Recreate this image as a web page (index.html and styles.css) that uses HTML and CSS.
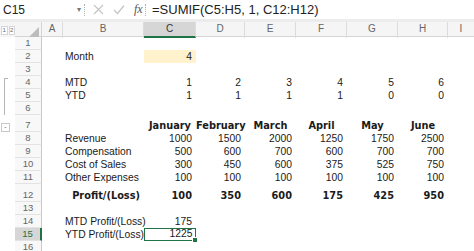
FILE: index.html
```html
<!DOCTYPE html>
<html lang="en">
<head>
    <meta charset="UTF-8">
    <title>Profit Summary</title>
    <link rel="stylesheet" href="styles.css">
</head>
<body>
    <div class="formula-bar">
        <div class="name-box">
            <span>C15</span>
            <span class="drop">&#9662;</span>
        </div>
        <div class="divider"></div>
        <div class="fb-icons">
            <svg width="11" height="11" viewBox="0 0 11 11"><path d="M1 1 L10 10 M10 1 L1 10" stroke="#c4c4c4" stroke-width="1.2" fill="none"/></svg>
            <svg width="12" height="11" viewBox="0 0 12 11"><path d="M1 6 L4.5 9.5 L11 1.5" stroke="#c4c4c4" stroke-width="1.2" fill="none"/></svg>
            <span class="fx">fx</span>
        </div>
        <div class="divider"></div>
        <div class="formula">=SUMIF(C5:H5, 1, C12:H12)</div>
    </div>
    <div class="band"></div>

    <div class="sheet">
        <!-- column headers -->
        <div class="row head-row">
            <div class="gutter levels"><span>1</span><span>2</span></div>
            <div class="corner"><div class="tri"></div></div>
            <div class="col-h">A</div>
            <div class="col-h">B</div>
            <div class="col-h active">C</div>
            <div class="col-h">D</div>
            <div class="col-h">E</div>
            <div class="col-h">F</div>
            <div class="col-h">G</div>
            <div class="col-h">H</div>
            <div class="col-h last">I</div>
        </div>

        <div class="row">
            <div class="gutter"></div><div class="row-h">1</div>
            <div></div><div></div><div></div><div></div><div></div><div></div><div></div><div></div><div></div>
        </div>
        <div class="row">
            <div class="gutter"></div><div class="row-h">2</div>
            <div></div><div class="c">Month</div><div class="c num fill">4</div><div></div><div></div><div></div><div></div><div></div><div></div>
        </div>
        <div class="row">
            <div class="gutter"></div><div class="row-h">3</div>
            <div></div><div></div><div></div><div></div><div></div><div></div><div></div><div></div><div></div>
        </div>
        <div class="row">
            <div class="gutter"><span class="ol-line top"></span></div><div class="row-h">4</div>
            <div></div><div class="c">MTD</div>
            <div class="c num">1</div><div class="c num">2</div><div class="c num">3</div><div class="c num">4</div><div class="c num">5</div><div class="c num">6</div><div></div>
        </div>
        <div class="row">
            <div class="gutter"><span class="ol-line"></span></div><div class="row-h">5</div>
            <div></div><div class="c">YTD</div>
            <div class="c num">1</div><div class="c num">1</div><div class="c num">1</div><div class="c num">1</div><div class="c num">0</div><div class="c num">0</div><div></div>
        </div>
        <div class="row">
            <div class="gutter"><span class="ol-line"></span></div><div class="row-h">6</div>
            <div></div><div></div><div></div><div></div><div></div><div></div><div></div><div></div><div></div>
        </div>
        <div class="row tall">
            <div class="gutter"><span class="ol-btn">-</span></div><div class="row-h">7</div>
            <div></div><div></div>
            <div class="c b mid">January</div><div class="c b mid">February</div><div class="c b mid">March</div><div class="c b mid">April</div><div class="c b mid">May</div><div class="c b mid">June</div><div></div>
        </div>
        <div class="row">
            <div class="gutter"></div><div class="row-h">8</div>
            <div></div><div class="c">Revenue</div>
            <div class="c num">1000</div><div class="c num">1500</div><div class="c num">2000</div><div class="c num">1250</div><div class="c num">1750</div><div class="c num">2500</div><div></div>
        </div>
        <div class="row">
            <div class="gutter"></div><div class="row-h">9</div>
            <div></div><div class="c">Compensation</div>
            <div class="c num">500</div><div class="c num">600</div><div class="c num">700</div><div class="c num">600</div><div class="c num">700</div><div class="c num">700</div><div></div>
        </div>
        <div class="row">
            <div class="gutter"></div><div class="row-h">10</div>
            <div></div><div class="c">Cost of Sales</div>
            <div class="c num">300</div><div class="c num">450</div><div class="c num">600</div><div class="c num">375</div><div class="c num">525</div><div class="c num">750</div><div></div>
        </div>
        <div class="row">
            <div class="gutter"></div><div class="row-h">11</div>
            <div></div><div class="c">Other Expenses</div>
            <div class="c num">100</div><div class="c num">100</div><div class="c num">100</div><div class="c num">100</div><div class="c num">100</div><div class="c num">100</div><div></div>
        </div>
        <div class="row taller">
            <div class="gutter"></div><div class="row-h">12</div>
            <div></div><div class="c b num">Profit/(Loss)</div>
            <div class="c b num">100</div><div class="c b num">350</div><div class="c b num">600</div><div class="c b num">175</div><div class="c b num">425</div><div class="c b num">950</div><div></div>
        </div>
        <div class="row">
            <div class="gutter"></div><div class="row-h">13</div>
            <div></div><div></div><div></div><div></div><div></div><div></div><div></div><div></div><div></div>
        </div>
        <div class="row">
            <div class="gutter"></div><div class="row-h">14</div>
            <div></div><div class="c">MTD Profit/(Loss)</div><div class="c num">175</div><div></div><div></div><div></div><div></div><div></div><div></div>
        </div>
        <div class="row">
            <div class="gutter"></div><div class="row-h active">15</div>
            <div></div><div class="c">YTD Profit/(Loss)</div><div class="c num selected">1225<span class="handle"></span></div><div></div><div></div><div></div><div></div><div></div><div></div>
        </div>
        <div class="row">
            <div class="gutter"></div><div class="row-h">16</div>
            <div></div><div></div><div></div><div></div><div></div><div></div><div></div><div></div><div></div>
        </div>
    </div>
</body>
</html>
```

FILE: styles.css
```css
body {
    margin: 0;
    background: #fff;
    font-family: 'Liberation Sans', Arial, sans-serif;
    color: #1a1a1a;
    overflow: hidden;
}
.formula-bar {
    display: flex;
    align-items: center;
    height: 19px;
    background: #fff;
}
.name-box {
    display: flex;
    justify-content: space-between;
    align-items: center;
    width: 78px;
    padding: 0 3px;
    font-size: 12px;
    color: #222;
}
.name-box .drop {
    font-size: 8px;
    color: #777;
}
.divider {
    width: 1px;
    height: 12px;
    border-left: 1px dotted #b0b0b0;
}
.fb-icons {
    display: flex;
    align-items: center;
    gap: 9px;
    width: 52px;
    padding-left: 7px;
}
.fx {
    font-family: 'Liberation Serif', serif;
    font-style: italic;
    font-size: 12px;
    color: #555;
}
.formula {
    padding-left: 5px;
    font-size: 13px;
    color: #222;
}
.band {
    height: 3px;
    background: #ececec;
}
.row {
    display: grid;
    grid-template-columns: 15px 27px 21px 81px 52px 49px 51px 51px 51px 50px 1fr;
    height: 13px;
    font-size: 10.3px;
    line-height: 13px;
}
.row.tall {
    height: 17px;
    align-items: end;
}
.row.taller {
    height: 18px;
    align-items: end;
}
.head-row {
    height: 14px;
    line-height: 14px;
    background: #f5f5f5;
    border-bottom: 1px solid #d4d4d4;
}
.gutter {
    background: #fff;
    position: relative;
}
.head-row .gutter {
    background: #f5f5f5;
}
.levels {
    display: flex;
    gap: 1px;
    align-items: center;
    padding-left: 1px;
}
.levels span {
    width: 5px;
    height: 7px;
    border: 1px solid #d6d6d6;
    background: #fff;
    font-size: 6px;
    line-height: 7px;
    text-align: center;
    color: #666;
}
.corner {
    display: flex;
    justify-content: flex-end;
    align-items: flex-end;
    padding: 0 2px 1px 0;
    border-right: 1px solid #d4d4d4;
}
.tri {
    width: 0;
    height: 0;
    border-left: 10px solid transparent;
    border-bottom: 10px solid #bdbdbd;
}
.col-h {
    text-align: center;
    color: #666;
    border-right: 1px solid #dcdcdc;
    font-size: 10px;
}
.col-h.active {
    background: #d6d6d6;
    border-bottom: 2px solid #217346;
    color: #333;
}
.col-h.last {
    border-right: none;
}
.row-h {
    text-align: center;
    font-size: 9.5px;
    color: #666;
    background: #f8f8f8;
    border-bottom: 1px solid #e3e3e3;
    border-right: 1px solid #c9c9c9;
    box-sizing: border-box;
    height: 100%;
    line-height: 12px;
    display: flex;
    align-items: flex-end;
    justify-content: center;
}
.row-h.active {
    background: #d6d6d6;
    color: #217346;
    border-right: 2px solid #217346;
}
.ol-line {
    display: block;
    margin-left: 4px;
    width: 1px;
    height: 13px;
    background: #b5b5b5;
}
.ol-line.top {
    width: 4px;
    background: none;
    border-left: 1px solid #b5b5b5;
    border-top: 1px solid #b5b5b5;
    box-sizing: border-box;
    margin-top: 2px;
    height: 11px;
}
.ol-btn {
    display: block;
    margin: 4px 0 0 1px;
    width: 7px;
    height: 7px;
    border: 1px solid #c8c8c8;
    font-size: 7px;
    line-height: 6px;
    text-align: center;
    color: #666;
}
.c {
    padding: 0 2px;
    white-space: nowrap;
}
.num {
    text-align: right;
    padding-right: 4px;
}
.mid {
    text-align: center;
    padding: 0;
}
.b {
    font-family: 'DejaVu Sans', sans-serif;
    font-weight: bold;
    font-size: 9.8px;
}
.fill {
    background: #fff2cc;
}
.selected {
    position: relative;
    border: 1.5px solid #217346;
    box-sizing: border-box;
    line-height: 10px;
    padding-right: 2.5px;
}
.handle {
    position: absolute;
    right: -3px;
    bottom: -3px;
    width: 4px;
    height: 4px;
    background: #217346;
    border: 1px solid #fff;
}
```
